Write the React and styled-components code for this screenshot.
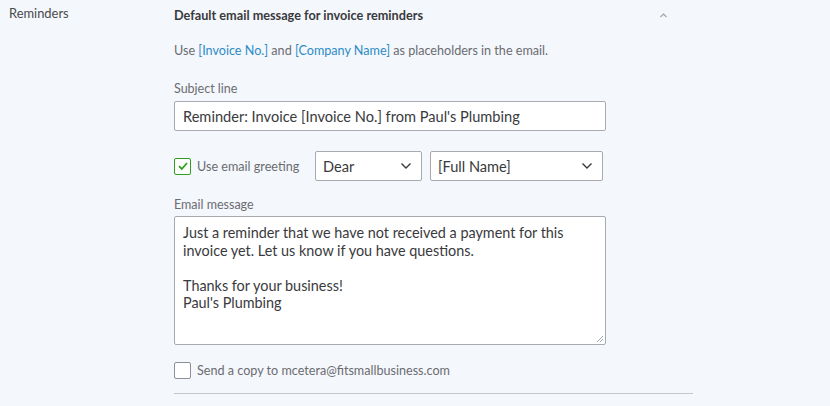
import React from 'react';
import styled, { createGlobalStyle } from 'styled-components';

const GlobalStyle = createGlobalStyle`
  html, body {
    margin: 0;
    background: #f4f7fb;
    font-family: Lato, "Open Sans", "Liberation Sans", sans-serif;
    color: #393a3d;
  }
`;

const Page = styled.div`
  display: grid;
  grid-template-columns: 174px 520px;
  width: 830px;
  height: 406px;
  overflow: hidden;
`;

const SectionLabel = styled.div`
  padding: 5px 0 0 9px;
  font-size: 12.9px;
  color: #4a4b4e;
`;

const Panel = styled.div`
  display: flex;
  flex-direction: column;
`;

const Header = styled.div`
  display: flex;
  justify-content: space-between;
  align-items: center;
  height: 30px;
  padding-right: 26px;
  font-size: 12.7px;
  font-weight: 700;
  color: #393a3d;
`;

const Chevron = styled.svg`
  width: 9px;
  height: 9px;
`;

const Hint = styled.p`
  margin: 13px 0 0;
  font-size: 12.6px;
  color: #6b6c72;
`;

const Placeholder = styled.span`
  color: #2d8bc7;
`;

const FieldLabel = styled.div`
  margin-top: ${p => p.top}px;
  font-size: 12.5px;
  color: #6b6c72;
`;

const TextInput = styled.div`
  box-sizing: border-box;
  width: 432px;
  height: 30px;
  margin-top: 5px;
  padding: 0 8px;
  display: flex;
  align-items: center;
  background: #fff;
  border: 1px solid #a8aab0;
  border-radius: 2px;
  font-size: 14.6px;
  color: #393a3d;
`;

const GreetingRow = styled.div`
  display: flex;
  align-items: center;
  margin-top: 20px;
  height: 30px;
`;

const CheckLabel = styled.label`
  display: flex;
  align-items: center;
  gap: 6px;
  font-size: 12.6px;
  color: #6b6c72;
  width: ${p => p.width || 'auto'};
`;

const Box = styled.span`
  box-sizing: border-box;
  width: 17px;
  height: 17px;
  display: flex;
  align-items: center;
  justify-content: center;
  background: #fff;
  border: 1px solid ${p => (p.checked ? '#2ca01c' : '#8d9096')};
  border-radius: 2px;
`;

const Select = styled.div`
  box-sizing: border-box;
  width: ${p => p.width}px;
  height: 30px;
  margin-left: ${p => p.gap}px;
  padding: 0 8px 0 7px;
  display: flex;
  align-items: center;
  justify-content: space-between;
  background: #fff;
  border: 1px solid #a8aab0;
  border-radius: 2px;
  font-size: 14.6px;
  color: #393a3d;
`;

const MessageBox = styled.div`
  position: relative;
  box-sizing: border-box;
  width: 432px;
  height: 129px;
  margin-top: 4px;
  padding: 7px 8px;
  background: #fff;
  border: 1px solid #a8aab0;
  border-radius: 2px;
  font-size: 14.4px;
  line-height: 17.5px;
  color: #393a3d;
  white-space: pre-wrap;
`;

const Grip = styled.svg`
  position: absolute;
  right: 1px;
  bottom: 1px;
  width: 8px;
  height: 8px;
`;

const CopyRow = styled.div`
  margin-top: 17px;
`;

const Divider = styled.hr`
  width: 519px;
  margin: 14px 0 0;
  border: 0;
  border-top: 1px solid #c4c6cb;
`;

const Caret = () => (
  <svg width="14" height="14" viewBox="0 0 14 14">
    <path d="M2.5 4.5 L7 9 L11.5 4.5" fill="none" stroke="#393a3d" strokeWidth="1.4" />
  </svg>
);

const message = `Just a reminder that we have not received a payment for this
invoice yet. Let us know if you have questions.

Thanks for your business!
Paul's Plumbing`;

export default function App() {
  return (
    <>
      <GlobalStyle />
      <Page>
        <SectionLabel>Reminders</SectionLabel>
        <Panel>
          <Header>
            <span>Default email message for invoice reminders</span>
            <Chevron viewBox="0 0 9 9">
              <path d="M1.5 6 L4.5 3 L7.5 6" fill="none" stroke="#a0a2a8" strokeWidth="1.1" />
            </Chevron>
          </Header>
          <Hint>
            Use <Placeholder>[Invoice No.]</Placeholder> and <Placeholder>[Company Name]</Placeholder> as
            placeholders in the email.
          </Hint>
          <FieldLabel top={23}>Subject line</FieldLabel>
          <TextInput>Reminder: Invoice [Invoice No.] from Paul's Plumbing</TextInput>
          <GreetingRow>
            <CheckLabel width="141px">
              <Box checked>
                <svg width="12" height="12" viewBox="0 0 12 12">
                  <path d="M2 6.2 L4.8 9 L10 3" fill="none" stroke="#2ca01c" strokeWidth="1.8" />
                </svg>
              </Box>
              Use email greeting
            </CheckLabel>
            <Select width={107} gap={0}>
              Dear
              <Caret />
            </Select>
            <Select width={173} gap={8}>
              [Full Name]
              <Caret />
            </Select>
          </GreetingRow>
          <FieldLabel top={16}>Email message</FieldLabel>
          <MessageBox>
            {message}
            <Grip viewBox="0 0 8 8">
              <path d="M7 1 L1 7 M7 4 L4 7" stroke="#9a9ca2" strokeWidth="0.9" />
            </Grip>
          </MessageBox>
          <CopyRow>
            <CheckLabel>
              <Box />
              Send a copy to mcetera@fitsmallbusiness.com
            </CheckLabel>
          </CopyRow>
          <Divider />
        </Panel>
      </Page>
    </>
  );
}
